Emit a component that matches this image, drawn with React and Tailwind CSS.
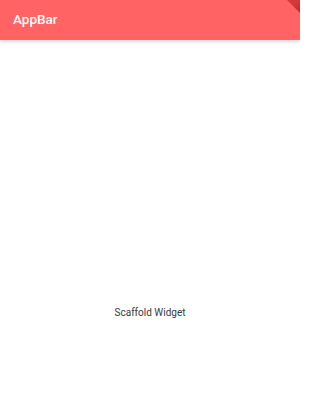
export default function App() {
  return (
    <div
      className="relative w-[300px] h-[404px] bg-white overflow-hidden"
      style={{ fontFamily: 'Roboto, "Noto Sans", sans-serif' }}
    >
      {/* AppBar */}
      <header className="h-[40px] bg-[#ff6363] flex items-center px-[13px] shadow-[0_2px_3px_rgba(0,0,0,0.15)]">
        <h1 className="text-white text-[13.5px] font-medium leading-none">AppBar</h1>
      </header>

      {/* Body */}
      <main className="pt-[267px] text-center">
        <p className="text-[#3a3a3a] text-[10px] leading-[12px]">Scaffold Widget</p>
      </main>

      {/* debug banner sliver */}
      <svg className="absolute top-0 right-0" width="16" height="16" viewBox="0 0 16 16">
        <defs>
          <linearGradient id="bn" x1="0" y1="0" x2="1" y2="1">
            <stop offset="0.45" stopColor="#b71c1c" stopOpacity="0.6" />
            <stop offset="1" stopColor="#b71c1c" stopOpacity="0.85" />
          </linearGradient>
        </defs>
        <polygon points="3,0 16,0 16,13" fill="url(#bn)" />
      </svg>
    </div>
  );
}
